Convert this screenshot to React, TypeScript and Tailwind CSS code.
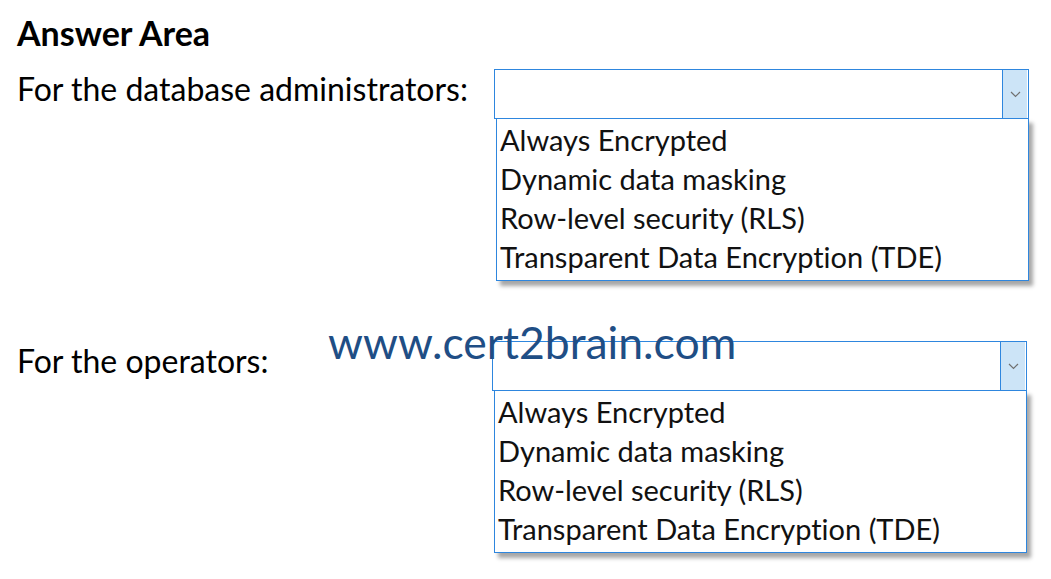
const OPTIONS = [
  'Always Encrypted',
  'Dynamic data masking',
  'Row-level security (RLS)',
  'Transparent Data Encryption (TDE)',
]

function Chevron() {
  return (
    <svg width="11" height="7" viewBox="0 0 11 7" fill="none">
      <path d="M1 1 L5.5 5.5 L10 1" stroke="#707070" strokeWidth="1.2" />
    </svg>
  )
}

function Dropdown() {
  return (
    <div className="flex flex-col w-[535px]">
      {/* closed select */}
      <div className="flex h-[50px] border border-[#2e86de] bg-white">
        <div className="flex-1" />
        <div className="w-[25px] mr-[1px] flex items-center justify-center bg-[#cce4f7] border-l border-[#2e86de]">
          <Chevron />
        </div>
      </div>
      {/* open list */}
      <div className="ml-[2px] -mt-[1px] border border-[#2e86de] bg-white shadow-[4px_5px_4px_rgba(0,0,0,0.35)] pt-[1px] pb-[4px]">
        {OPTIONS.map(o => (
          <div key={o} className="h-[39px] leading-[39px] pl-[3px] text-[29px] text-[#111]">{o}</div>
        ))}
      </div>
    </div>
  )
}

export default function App() {
  return (
    <div className="relative w-[1051px] h-[579px] bg-white overflow-hidden font-['Lato',sans-serif] text-black [font-variant-ligatures:none]">
      <h1 className="pl-[17px] pt-[16px] text-[34px] font-bold leading-[34px]">Answer Area</h1>

      <div className="flex mt-[19px]">
        <div className="w-[494px] pl-[17px] pt-[3px] text-[32px] leading-[34px]">For the database administrators:</div>
        <Dropdown />
      </div>

      <div className="flex mt-[60px]">
        <div className="w-[492px] pl-[17px] pt-[3px] text-[32px] leading-[34px]">For the operators:</div>
        <Dropdown />
      </div>

      {/* watermark */}
      <div className="absolute left-[328px] top-[317px] text-[44.5px] leading-[50px] text-[#1f4e85]">www.cert2brain.com</div>
    </div>
  )
}
